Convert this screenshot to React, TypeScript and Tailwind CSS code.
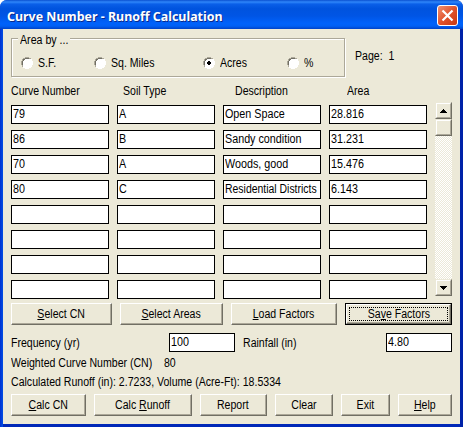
import type { ReactNode } from "react";
import clsx from "clsx";

const rows = [
  ["79", "A", "Open Space", "28.816"],
  ["86", "B", "Sandy condition", "31.231"],
  ["70", "A", "Woods, good", "15.476"],
  ["80", "C", "Residential Districts", "6.143"],
  ["", "", "", ""],
  ["", "", "", ""],
  ["", "", "", ""],
  ["", "", "", ""],
];

// The dialog font is narrow, so every label is squeezed horizontally.
function Text({ children, className }: { children?: ReactNode; className?: string }) {
  return (
    <span className={clsx("inline-block whitespace-pre", className ?? "origin-left scale-x-[0.845]")}>
      {children}
    </span>
  );
}

function Field({ children, className }: { children?: string; className?: string }) {
  return (
    <div className={clsx("h-[19px] border border-black bg-white pl-px leading-[16px]", className)}>
      <Text className={clsx("origin-left", children && children.length > 18 ? "scale-x-[0.835]" : "scale-x-[0.86]")}>
        {children}
      </Text>
    </div>
  );
}

function Button({ children, className, focused }: { children: ReactNode; className: string; focused?: boolean }) {
  return (
    <button className={clsx("h-[22px] shrink-0", focused && "border border-black", className)}>
      <span className="block h-full border border-t-white border-l-white border-r-[#716f64] border-b-[#716f64]">
        <span className="block h-full border-r border-b border-r-[#aca899] border-b-[#aca899]">
          <span className={clsx("block h-full", focused && "p-[2px] pr-px pb-px")}>
            <span
              className={clsx(
                "flex h-full w-full items-center justify-center",
                focused && "border border-dotted border-black",
              )}
            >
              <Text className="origin-center scale-x-[0.845]">{children}</Text>
            </span>
          </span>
        </span>
      </span>
    </button>
  );
}

function U({ children }: { children: string }) {
  return <span className="underline underline-offset-1 decoration-1">{children}</span>;
}

function Radio({ label, checked, className }: { label: string; checked?: boolean; className: string }) {
  return (
    <label className={clsx("flex items-center gap-[5px]", className)}>
      <svg className="shrink-0" width="12" height="12" viewBox="0 0 12 12" shapeRendering="crispEdges">
        <path d="M4 1h4v1h2v2h1v4h-1v2h-2v1h-4v-1h-2v-2h-1v-4h1v-2h2z" fill="#fff" />
        <path d="M10 2h1v2h1v4h-1v2h-1v1h-2v1h-4v-1h-2v-1h2v-1h4v-1h2v-4z" fill="#fff" />
        <path d="M4 0h4v1h-4zM2 1h2v1h-2zM8 1h2v1h-2zM1 2h1v2h-1zM0 4h1v4h-1zM1 8h1v2h-1z" fill="#aca899" />
        <path d="M4 1h4v1h-4zM2 2h2v1h-1v1h-1zM1 4h1v4h-1z" fill="#716f64" />
        {checked && <path d="M5 4h2v1h1v2h-1v1h-2v-1h-1v-2h1z" fill="#000" />}
      </svg>
      <Text>{label}</Text>
    </label>
  );
}

function ScrollButton({ d }: { d?: string }) {
  return (
    <div className="h-[17px] w-[17px] border border-t-[#ece9d8] border-l-[#ece9d8] border-r-[#716f64] border-b-[#716f64] bg-[#ece9d8]">
      <div className="h-full border border-t-white border-l-white border-r-[#aca899] border-b-[#aca899]">
        {d && (
          <svg width="13" height="13" viewBox="0 0 13 13" shapeRendering="crispEdges">
            <path d={d} />
          </svg>
        )}
      </div>
    </div>
  );
}

export default function App() {
  return (
    <div className="h-[427px] w-[463px] overflow-hidden bg-white">
      <div className="flex h-full flex-col overflow-hidden rounded-t-[7px] bg-linear-to-r from-[#0030d0] from-0% via-[#0a5cf0] via-1% to-[#0022a8] font-['Liberation_Sans',Arial,sans-serif] text-[12.5px] leading-[14px] text-black">
        <header className="flex h-[29px] shrink-0 items-center justify-between bg-[linear-gradient(#0a50d0_0,#2f86fa_7%,#0a5fe8_14%,#0053de_30%,#0055e5_55%,#0062fb_80%,#0060f5_90%,#0042c8_100%)] pt-[2px] pr-[5px] pl-[7px]">
          <h1 className="origin-left scale-x-[0.956] font-['Noto_Sans',sans-serif] text-[13px] font-bold whitespace-nowrap text-white [text-shadow:1px_1px_#0a2a8c]">
            Curve Number - Runoff Calculation
          </h1>
          <button className="h-[21px] w-[21px] rounded-[3px] border border-white bg-linear-to-br from-[#f0906f] via-[#e0532c] to-[#c8370c]">
            <svg width="19" height="19" viewBox="0 0 19 19">
              <path d="M4.5 4.5l10 10M14.5 4.5l-10 10" stroke="#fff" strokeWidth="2.2" />
            </svg>
          </button>
        </header>

        <main className="mr-[3px] ml-[3px] flex-1 border-b-3 border-b-[#0028b8] bg-[#ece9d8] px-2">
          <div className="flex h-[55px] pt-[9px]">
            <section className="h-[39px] w-[334px] border border-[#aca899] shadow-[1px_1px_#fff,inset_1px_1px_#fff]">
              <h2 className="-mt-[6px] ml-[6px] h-[14px] w-[52px] bg-[#ece9d8] pl-[2px]">
                <Text className="origin-left scale-x-[0.85]">Area by ...</Text>
              </h2>
              <div className="mt-[9px] flex pl-[9px]">
                <Radio label="S.F." className="w-[73px]" />
                <Radio label="Sq. Miles" className="w-[109px]" />
                <Radio label="Acres" checked className="w-[84px]" />
                <Radio label="%" className="w-[40px]" />
              </div>
            </section>
            <p className="mt-[11px] ml-[10px]">
              <Text>Page:  1</Text>
            </p>
          </div>

          <div className="grid h-[21px] grid-cols-[repeat(4,112px)]">
            <Text>Curve Number</Text>
            <Text>Soil Type</Text>
            <Text>Description</Text>
            <Text>Area</Text>
          </div>

          <div className="flex h-[198px] gap-2">
            <div className="grid auto-rows-[19px] grid-cols-[repeat(4,98px)] gap-x-2 gap-y-[6px]">
              {rows.flat().map((cell, i) => (
                <Field key={i}>{cell}</Field>
              ))}
            </div>
            <div className="-mt-[3px] flex h-[194px] w-[17px] flex-col bg-[repeating-conic-gradient(#fff_0_25%,#ece9d8_0_50%)] bg-size-[2px_2px]">
              <ScrollButton d="M6 5h1v1h1v1h1v1h1v1h-7v-1h1v-1h1v-1h1z" />
              <ScrollButton />
              <div className="flex-1" />
              <ScrollButton d="M3 5h7v1h-1v1h-1v1h-1v1h-1v-1h-1v-1h-1v-1h-1z" />
            </div>
          </div>

          <div className="flex gap-2">
            <Button className="w-[101px]"><U>S</U>elect CN</Button>
            <Button className="w-[103px]"><U>S</U>elect Areas</Button>
            <Button className="w-[106px]"><U>L</U>oad Factors</Button>
            <Button className="w-[107px]" focused>Sa<U>v</U>e Factors</Button>
          </div>

          <div className="mt-2 flex h-[23px]">
            <span className="mt-[3px] w-[158px]"><Text>Frequency (yr)</Text></span>
            <Field className="w-[66px]">100</Field>
            <span className="mt-[3px] ml-[8px] w-[143px]"><Text>Rainfall (in)</Text></span>
            <Field className="w-[66px]">4.80</Field>
          </div>
          <p className="flex h-[19px]">
            <span className="w-[153px]"><Text>Weighted Curve Number (CN)</Text></span>
            <Text>80</Text>
          </p>
          <p className="h-[19px]">
            <Text>Calculated Runoff (in): 2.7233, Volume (Acre-Ft): 18.5334</Text>
          </p>

          <div className="flex gap-2">
            <Button className="w-[75px]"><U>C</U>alc CN</Button>
            <Button className="w-[98px]">Calc <U>R</U>unoff</Button>
            <Button className="w-[67px]">Report</Button>
            <Button className="w-[58px]">Clear</Button>
            <Button className="w-[49px]">Exit</Button>
            <Button className="w-[54px]"><U>H</U>elp</Button>
          </div>
        </main>
      </div>
    </div>
  );
}
